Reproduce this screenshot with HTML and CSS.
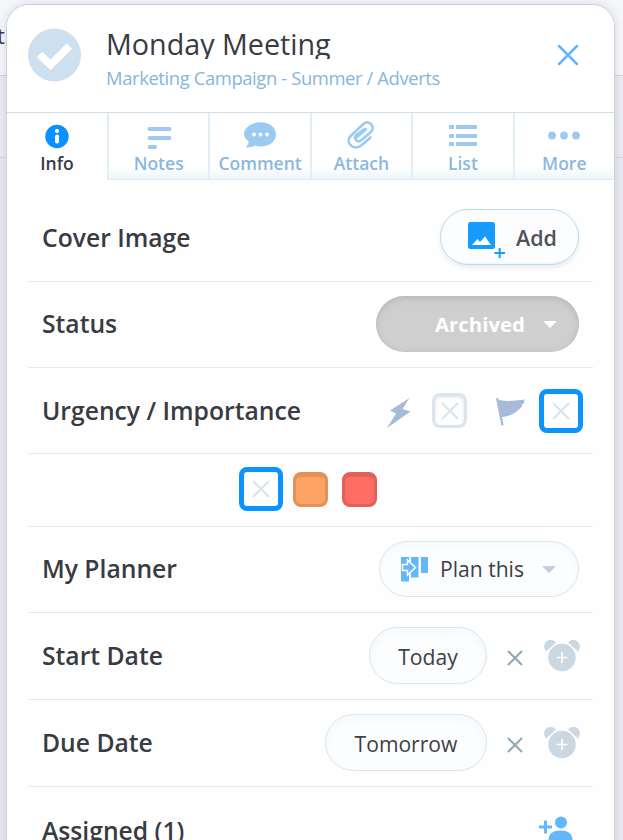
FILE: index.html
```
<!DOCTYPE html>
<html lang="en">
<head>
<meta charset="utf-8">
<title>Monday Meeting</title>
<link rel="stylesheet" href="styles.css">
</head>
<body>
<div class="page">
  <div class="backdrop"><div class="back-head">t</div><div class="back-mid"></div><div class="back-body"></div></div>
  <main class="card">
    <header class="head">
      <svg class="check" width="54" height="54" viewBox="0 0 54 54"><circle cx="26.500" cy="27" r="26.500" fill="#cde0ef"/><path d="M11.500 26.500L22.500 37L41.500 18" fill="none" stroke="#fff" stroke-width="7.500"/></svg>
      <div class="titles">
        <h1>Monday Meeting</h1>
        <p>Marketing Campaign - Summer / Adverts</p>
      </div>
      <svg class="close" width="22" height="22" viewBox="0 0 22 22"><path d="M2 2L20 20M20 2L2 20" stroke="#62b5fc" stroke-width="2.500" stroke-linecap="round"/></svg>
    </header>
    <nav class="tabs">
      <div class="tab active"><svg width="32" height="32" viewBox="0 0 32 32"><circle cx="16" cy="16.500" r="11.700" fill="#0a91ff"/><circle cx="16" cy="11" r="2.100" fill="#fff"/><path d="M16 16.500V21.500" stroke="#fff" stroke-width="4" stroke-linecap="round"/></svg><span>Info</span></div>
      <div class="tab"><svg width="32" height="32" viewBox="0 0 32 32"><path d="M6.500 9H26.500M6.500 18H26.500M6.500 27H12" stroke="#9ccaf0" stroke-width="4" stroke-linecap="round"/></svg><span>Notes</span></div>
      <div class="tab"><svg width="32" height="32" viewBox="0 0 32 32"><path d="M17 2.200C25.500 2.200 32 7.500 32 14.500S25.500 26.500 17 26.500C15 26.500 13 26.200 11 25.500C8.500 27.100 5.500 27.500 1.500 27.500C3.500 25.500 4.500 23.500 4.800 21.500C1.800 19 0 17 0 14C0 7.500 8 2.200 17 2.200Z" fill="#9ccaf0"/><g fill="#fff"><circle cx="10" cy="14.500" r="1.900"/><circle cx="16.500" cy="14.500" r="1.900"/><circle cx="23" cy="14.500" r="1.900"/></g></svg><span>Comment</span></div>
      <div class="tab"><svg width="32" height="32" viewBox="0 0 32 32"><path d="M10 18.500L18.500 11.500M18.500 11.500L21 9.500M25.500 17.500L16.500 25.300C8.500 31.500 -.5 22.500 6 15.500L18.500 4C24.500-1 31 7 25.500 12.500L16.500 20C12.500 23.500 7.500 18.500 11.500 14.700L19.500 9" fill="none" stroke="#9ccaf0" stroke-width="2.600" stroke-linecap="round" stroke-linejoin="round"/></svg><span>Attach</span></div>
      <div class="tab"><svg width="32" height="32" viewBox="0 0 32 32"><path d="M2 7H7M9 7H30M2 16H7M9 16H30M2 24H7M9 24H30" stroke="#9ccaf0" stroke-width="4"/></svg><span>List</span></div>
      <div class="tab"><svg width="32" height="32" viewBox="0 0 32 32"><g fill="#9ccaf0"><circle cx="4" cy="15.500" r="3.900"/><circle cx="16" cy="15.500" r="3.900"/><circle cx="28" cy="15.500" r="3.900"/></g></svg><span>More</span></div>
    </nav>
    <div class="rows">
      <section class="row cover"><h2>Cover Image</h2>
        <button class="pill add"><svg width="38" height="38" viewBox="0 0 38 38"><rect width="27" height="27" rx="2.500" fill="#189bff"/><path d="M4 23L9.500 17L12 20L17 14.500L23 23Z" fill="#fff"/><path d="M26.500 31H37M31.700 26V36" stroke="#189bff" stroke-width="2"/></svg><span>Add</span></button></section>
      <section class="row status"><h2>Status</h2>
        <button class="pill archived"><span>Archived</span><i class="caret"></i></button></section>
      <section class="row urgency"><h2>Urgency / Importance</h2>
        <div class="choices">
          <svg class="bolt" width="24" height="30" viewBox="0 0 24 30"><path d="M22.500 0L3 12.500L9 15.500L0 30L23.500 13.500L15.500 11Z" fill="#a6bbd7"/></svg>
          <div class="box"><svg width="18" height="18" viewBox="0 0 18 18"><path d="M1 1L17 17M17 1L1 17" stroke="#d9e5ee" stroke-width="2.200"/></svg></div>
          <svg class="flag" width="30" height="28" viewBox="0 0 30 28"><path d="M0 .5L2 0L3 2C11 3.500 18 3 29 1.500L27.500 4L29 4.500L25.500 7L26.500 8C20 15 15 18 6 19L7.500 27L5.500 28Z" fill="#a6bbd7"/></svg>
          <div class="box picked"><svg width="18" height="18" viewBox="0 0 18 18"><path d="M1 1L17 17M17 1L1 17" stroke="#d9e5ee" stroke-width="2.200"/></svg></div>
        </div></section>
      <section class="row colors">
        <div class="box picked"><svg width="18" height="18" viewBox="0 0 18 18"><path d="M1 1L17 17M17 1L1 17" stroke="#d9e5ee" stroke-width="2.200"/></svg></div>
        <div class="box orange"></div><div class="box red"></div></section>
      <section class="row planner"><h2>My Planner</h2>
        <button class="pill plan"><svg width="27" height="25" viewBox="0 0 27 25"><path d="M0 0H8V24.500H0ZM10 0H17.500V20.500H10ZM20 0H27V16H20Z" fill="#65b7fc"/><path d="M1.500 7.500H6.500V3L14.500 10.500L6.500 18V13.500H1.500Z" fill="#65b7fc" stroke="#fff" stroke-width="1.500"/></svg><span>Plan this</span><i class="caret"></i></button></section>
      <section class="row start"><h2>Start Date</h2>
        <button class="pill date today">Today</button>
        <svg class="clear" width="16" height="16" viewBox="0 0 16 16"><path d="M1 1L15 15M15 1L1 15" stroke="#91a8b4" stroke-width="2"/></svg>
        <svg class="alarm" width="36" height="32" viewBox="0 0 36 32"><g fill="#cbd7e1"><path d="M2 11.500C-4 3 6-4 12 2.500Z"/><path d="M34 11.500C40 3 30-4 24 2.500Z"/></g><circle cx="18" cy="17.500" r="13.700" fill="#cbd7e1"/><path d="M12.500 17.500H23.500M18 12V23" stroke="#fff" stroke-width="1.600"/></svg></section>
      <section class="row due"><h2>Due Date</h2>
        <button class="pill date tomorrow">Tomorrow</button>
        <svg class="clear" width="16" height="16" viewBox="0 0 16 16"><path d="M1 1L15 15M15 1L1 15" stroke="#91a8b4" stroke-width="2"/></svg>
        <svg class="alarm" width="36" height="32" viewBox="0 0 36 32"><g fill="#cbd7e1"><path d="M2 11.500C-4 3 6-4 12 2.500Z"/><path d="M34 11.500C40 3 30-4 24 2.500Z"/></g><circle cx="18" cy="17.500" r="13.700" fill="#cbd7e1"/><path d="M12.500 17.500H23.500M18 12V23" stroke="#fff" stroke-width="1.600"/></svg></section>
      <section class="row assigned"><h2>Assigned (1)</h2>
        <svg class="person" width="34" height="30" viewBox="0 0 34 30"><circle cx="22" cy="6.500" r="6" fill="#65b7fc"/><path d="M9.500 24.500C9.500 17.500 14 14.500 21.500 14.500S33.500 17.500 33.500 24.500V30H9.500Z" fill="#65b7fc"/><path d="M0 11H13M6.500 4.500V17.500" stroke="#65b7fc" stroke-width="3"/></svg></section>
    </div>
  </main>
</div>
</body>
</html>
```

FILE: styles.css
```
* { box-sizing: border-box; }
body {
  margin: 0;
  height: 840px;
  overflow: hidden;
  font-family: "Open Sans", "Noto Sans", sans-serif;
  color: #383b42;
}
h1, h2, p { margin: 0; }
.page { display: grid; height: 840px; overflow: hidden; }
.backdrop, .card { grid-area: 1 / 1; min-width: 0; }
.backdrop { display: flex; flex-direction: column; }
.back-head {
  height: 76px;
  padding-top: 20px;
  background: #f5f6f8;
  border-bottom: 1px solid #ced1dc;
  font-size: 22px;
  line-height: 30px;
  text-indent: -3px;
}
.back-mid { height: 82px; background: #eaebf0; border-bottom: 1px solid #d3d5df; }
.back-body { flex: 1; background: #e8e9ee; }
.card {
  z-index: 1;
  margin: 4px 8px 0 6px;
  height: 870px;
  background: #fefefe;
  border: 1px solid #cbd0dc;
  border-radius: 23px 23px 0 0;
  box-shadow: 0 0 9px rgba(70, 80, 120, .16);
  overflow: hidden;
}
.head {
  display: flex;
  height: 108px;
  padding: 0 35px 0 21px;
  background: #fff;
  border-bottom: 1px solid #cddfeb;
}
.check { margin-top: 23px; }
.titles { flex: 1; margin-left: 24px; white-space: nowrap; }
h1 {
  height: 35px;
  margin-top: 19px;
  overflow: hidden;
  font-size: 28.7px;
  font-weight: 400;
  line-height: 39px;
}
.titles p {
  margin-top: 6px;
  color: #86b6dd;
  font-size: 18.4px;
  letter-spacing: -.38px;
  line-height: 26px;
}
.close { margin-top: 39px; }
.tabs { display: grid; grid-template-columns: 100px repeat(5, 1fr); height: 67px; }
.tab {
  display: flex;
  flex-direction: column;
  align-items: center;
  padding-top: 7px;
  border-left: 2px solid #e3edf4;
  border-bottom: 1px solid #dfebf1;
  background: linear-gradient(#fff 80%, #edf6f9);
  color: #8ab8de;
  font-size: 17.5px;
  font-weight: 600;
  line-height: 23px;
}
.tab svg { flex: none; }
.tab.active { border: 0; background: none; color: #383b42; }
.rows { padding: 0 21px; }
.row {
  display: flex;
  align-items: center;
  height: 87px;
  padding: 0 14px;
  border-bottom: 1px solid #e0ebf1;
}
h2 { margin-right: auto; font-size: 24.7px; font-weight: 600; line-height: 32px; white-space: nowrap; }
.cover { height: 102px; padding-top: 13px; }
.cover h2 { margin-top: 2px; }
.status, .urgency, .planner { height: 86px; }
.status { padding-bottom: 1px; }
.pill {
  display: flex;
  align-items: center;
  flex: none;
  height: 56px;
  padding: 0;
  border: 1px solid #d9e6ef;
  border-radius: 29px;
  background: #fcfdfe;
  box-shadow: inset 0 4px 8px #f4f9fd;
  color: #3d4047;
  font: 400 21.100px/30px "Open Sans", sans-serif;
}
.add {
  width: 139px;
  padding-left: 27px;
  border-color: #bdd8eb;
  box-shadow: 0 3px 5px #e8eef3, inset 0 -5px 2px -4px #edf4f9;
  color: #51515c;
  font-size: 21.5px;
  font-weight: 600;
}
.add svg { margin-top: 7px; }
.add span { margin: 2px 0 0 10px; }
.archived {
  width: 203px;
  justify-content: flex-end;
  padding-right: 22px;
  border: 0;
  background: #cfcfcf;
  box-shadow: inset 0 2px 7px #b6b6b6;
  color: #fff;
  font-size: 20.400px;
  font-weight: 700;
}
.caret {
  width: 0;
  height: 0;
  border: 7px solid transparent;
  border-top-color: currentColor;
  border-bottom: 0;
}
.archived .caret { margin-left: 18px; }
.choices { display: flex; align-items: center; margin-right: -4px; }
.bolt { margin: 4px 21px 0 0; }
.flag { margin: 2px 13px 0 29px; }
.box {
  display: grid;
  place-items: center;
  width: 35px;
  height: 35px;
  border: 3px solid #dce4ec;
  border-radius: 8px;
  box-shadow: inset 0 1px 3px #ddd;
}
.box.picked { width: 44px; height: 44px; border: 5px solid #0994ff; background: #fff; box-shadow: none; }
.colors { height: 73px; justify-content: center; gap: 14px; padding: 0 20px 2px 14px; }
.colors .picked { margin-right: -4px; }
.orange { background: #ffa364; border-color: #e39257; border-top-width: 5px; box-shadow: none; }
.red { background: #ff6d63; border-color: #e0605a; border-top-width: 5px; box-shadow: none; }
.planner { padding-bottom: 1px; }
.plan { width: 200px; padding: 0 22px 0 21px; }
.plan span { margin-left: 12px; }
.plan .caret { margin-left: auto; color: #cacbdd; }
.date { height: 57px; justify-content: center; }
.start, .due { padding-bottom: 1px; }
.today { width: 118px; padding-top: 2px; }
.tomorrow { width: 162px; padding-top: 2px; }
.clear { flex: none; margin: 4px 0 0 20px; }
.alarm { flex: none; margin: 1px 0 0 21px; }
.start .alarm, .due .alarm { margin-right: -1px; }
.start .pill, .due .pill { margin-left: 1px; }
.assigned { border: 0; }
.person { margin: 0 6px 0 0; }
```
